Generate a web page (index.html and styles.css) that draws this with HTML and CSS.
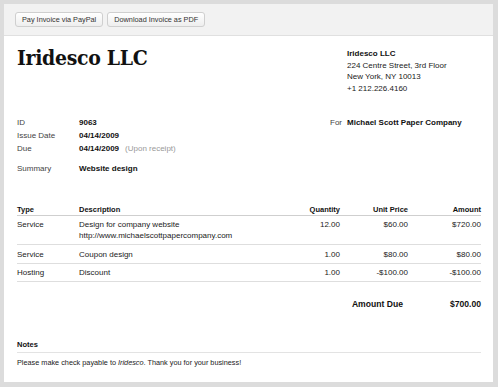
FILE: index.html
```html
<!DOCTYPE html>
<html>
<head>
<meta charset="utf-8">
<link rel="stylesheet" href="styles.css">
</head>
<body>
<div class="frame">
  <div class="toolbar">
    <button class="btn">Pay Invoice via PayPal</button>
    <button class="btn">Download Invoice as PDF</button>
  </div>
  <div class="content">
    <div class="head">
      <h1 class="title">Iridesco LLC</h1>
      <div class="address">
        <strong>Iridesco LLC</strong><br>
        224 Centre Street, 3rd Floor<br>
        New York, NY 10013<br>
        +1 212.226.4160
      </div>
    </div>
    <div class="meta">
      <div class="meta-left">
        <div class="mrow"><span class="label">ID</span><span class="val">9063</span></div>
        <div class="mrow"><span class="label">Issue Date</span><span class="val">04/14/2009</span></div>
        <div class="mrow"><span class="label">Due</span><span class="val">04/14/2009</span><span class="note">(Upon receipt)</span></div>
        <div class="mrow summary"><span class="label">Summary</span><span class="val">Website design</span></div>
      </div>
      <div class="meta-right">
        <span class="for">For</span><span class="val">Michael Scott Paper Company</span>
      </div>
    </div>
    <table class="items">
      <thead>
        <tr><th class="c-type">Type</th><th class="c-desc">Description</th><th class="num">Quantity</th><th class="num c-price">Unit Price</th><th class="num c-amt">Amount</th></tr>
      </thead>
      <tbody>
        <tr><td>Service</td><td>Design for company website<br>http://www.michaelscottpapercompany.com</td><td class="num">12.00</td><td class="num">$60.00</td><td class="num">$720.00</td></tr>
        <tr><td>Service</td><td>Coupon design</td><td class="num">1.00</td><td class="num">$80.00</td><td class="num">$80.00</td></tr>
        <tr><td>Hosting</td><td>Discount</td><td class="num">1.00</td><td class="num">-$100.00</td><td class="num">-$100.00</td></tr>
      </tbody>
    </table>
    <div class="due">
      <span class="due-label">Amount Due</span><span class="due-val">$700.00</span>
    </div>
    <div class="notes">
      <div class="notes-title">Notes</div>
      <p class="notes-text">Please make check payable to <em>Iridesco</em>. Thank you for your business!</p>
    </div>
  </div>
</div>
</body>
</html>
```

FILE: styles.css
```css
html, body {
  margin: 0;
  padding: 0;
}
body {
  background: #dcdcdc;
  padding: 4px 5px 5px 4px;
  font-family: "Liberation Sans", Arial, sans-serif;
  color: #222;
  font-size: 8px;
}
.frame {
  width: 489px;
  height: 378px;
  background: #fff;
  box-sizing: border-box;
  overflow: hidden;
}
.toolbar {
  height: 32px;
  box-sizing: border-box;
  background: #f2f2f2;
  border-bottom: 1px solid #e0e0e0;
  padding: 8px 11px 0;
  display: flex;
  gap: 4px;
  align-items: flex-start;
}
.btn {
  height: 15px;
  padding: 0 6px;
  font-family: "Liberation Sans", Arial, sans-serif;
  font-size: 7.3px;
  color: #333;
  background: linear-gradient(#ffffff, #eeeeee);
  border: 1px solid #cfcfcf;
  border-radius: 3px;
  line-height: 13px;
}
.content {
  padding: 10px 12px 0 13px;
}
.head {
  display: flex;
  justify-content: space-between;
  align-items: flex-start;
}
.title {
  margin: 0;
  font-family: "DejaVu Serif Condensed", "DejaVu Serif", serif;
  font-weight: bold;
  font-size: 21px;
  line-height: 24px;
  color: #111;
  letter-spacing: -0.3px;
}
.address {
  width: 134px;
  line-height: 11.5px;
  font-size: 8px;
  color: #222;
  margin-top: 2px;
}
.address strong {
  color: #111;
}
.meta {
  display: flex;
  justify-content: space-between;
  margin-top: 22px;
}
.mrow {
  display: flex;
  line-height: 13px;
  height: 13px;
}
.mrow.summary {
  margin-top: 7px;
}
.label {
  width: 62px;
  color: #444;
}
.val {
  font-weight: bold;
  color: #111;
}
.note {
  color: #999;
  margin-left: 6px;
}
.meta-right {
  width: 151px;
  line-height: 13px;
  display: flex;
}
.for {
  width: 17px;
  color: #444;
}
.items {
  width: 100%;
  border-collapse: collapse;
  margin-top: 30px;
  font-size: 8px;
}
.items th {
  font-size: 7.5px;
  font-weight: bold;
  color: #111;
  text-align: left;
  line-height: 10px;
  padding: 0;
  border-bottom: 1px solid #cfcfcf;
}
.items td {
  padding: 3.2px 0;
  line-height: 11px;
  vertical-align: top;
  border-bottom: 1px solid #dedede;
  color: #222;
}
.items .num {
  text-align: right;
}
.c-type {
  width: 62px;
}
.c-price {
  width: 68px;
}
.c-amt {
  width: 73px;
}
.due {
  display: flex;
  justify-content: flex-end;
  margin-top: 15.5px;
  font-weight: bold;
  font-size: 8.6px;
  color: #111;
  line-height: 12px;
}
.due-val {
  width: 78px;
  text-align: right;
}
.notes {
  margin-top: 30px;
}
.notes-title {
  font-weight: bold;
  font-size: 7.5px;
  color: #111;
  line-height: 10px;
  padding-bottom: 2px;
  border-bottom: 1px solid #e3e3e3;
}
.notes-text {
  margin: 5px 0 0;
  line-height: 10px;
  font-size: 7.3px;
  color: #222;
}
```
